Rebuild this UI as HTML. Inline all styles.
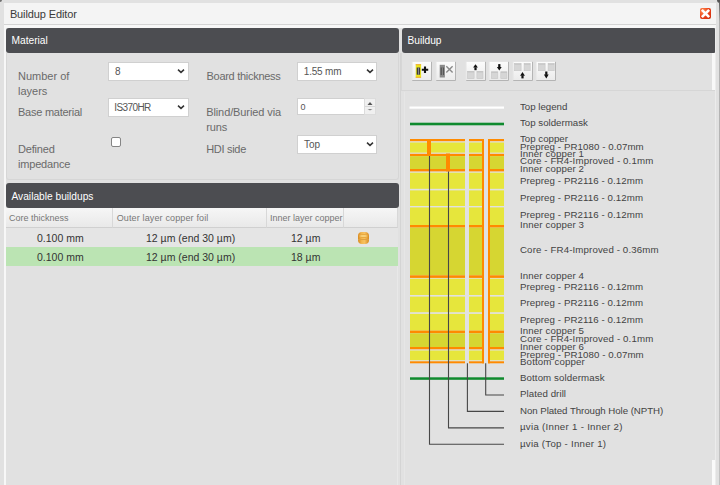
<!DOCTYPE html>
<html><head><meta charset="utf-8">
<style>
*{margin:0;padding:0;box-sizing:border-box}
html,body{width:720px;height:485px;overflow:hidden;background:#e1e1e1;font-family:"Liberation Sans",sans-serif}
.a{position:absolute;white-space:nowrap}
#dlg{position:absolute;left:0;top:0;width:720px;height:485px}
#title{position:absolute;left:4px;top:3px;width:712px;height:22px;background:#f4f4f4;border-bottom:1px solid #d4d4d4}
.hdr{position:absolute;height:25px;background:#4c4d51;border-radius:3px;color:#fff;font-size:10.2px}
.hdr span{left:5.5px!important;top:7.2px!important}
.lbl{position:absolute;font-size:11px;color:#6a6a6a;line-height:14.5px;white-space:nowrap}
.sel{position:absolute;background:#fff;border:1px solid #d0d0d0;height:18.6px;font-size:10px;color:#555}
.sel span{position:absolute;left:6px;top:3px}
.chev{position:absolute;width:8px;height:5px}
.th{position:absolute;top:208px;height:20px;background:linear-gradient(#f6f6f6,#e9e9e9);border-bottom:1px solid #d0d0d0;border-right:1px solid #d8d8d8;font-size:9px;color:#777}
.th span{position:absolute;left:3px;top:5.2px}
.td{position:absolute;font-size:10.5px;color:#333}
.dl{position:absolute;left:520px;font-size:9.7px;color:#333;white-space:nowrap;line-height:10px}
.btn{position:absolute;top:61px;width:20px;height:19px;background:linear-gradient(#fbfbfb,#ececec);border:1px solid #d9d9d9;border-right-color:#bdbdbd;border-bottom-color:#b5b5b5}
</style></head><body>
<div id="dlg">
  <!-- outer corners -->
  <div class="a" style="left:0;top:0;width:2px;height:2px;background:#555;border-radius:0 0 2px 0;opacity:0.8"></div>
  <div class="a" style="left:717px;top:0;width:3px;height:3px;background:#555;border-radius:0 0 0 3px"></div>
  <div class="a" style="left:715px;top:3px;width:1px;height:482px;background:#ececec"></div>
  <div class="a" style="left:718.5px;top:2px;width:1.5px;height:483px;background:linear-gradient(#606060,#b0b0b0 4%,#c2c2c2)"></div>
  <!-- white left strip -->
  <div class="a" style="left:4px;top:25px;width:2px;height:460px;background:#f7f7f7"></div>
  <div id="title"></div>
  <div class="a" style="left:4px;top:25px;width:712px;height:3px;background:#f7f7f7"></div>
  <div class="a" style="left:9.9px;top:8.1px;font-size:11px;color:#3a3a3a;letter-spacing:-0.12px">Buildup Editor</div>
  <!-- close btn -->
  <div class="a" style="left:700px;top:8px;width:11px;height:11px;border-radius:2px;background:radial-gradient(circle at 25% 25%,#ff8a50,#e8401a 55%,#c82a0a)"></div>
  <svg class="a" style="left:700px;top:8px" width="11" height="11"><path d="M2.8 2.8L8.2 8.2M8.2 2.8L2.8 8.2" stroke="#fff" stroke-width="2.6" stroke-linecap="square"/></svg>

  <!-- Material panel -->
  <div class="hdr" style="left:6px;top:28px;width:393px"><span class="a" style="left:5px;top:8px">Material</span></div>
  <div class="a" style="left:6px;top:53px;width:393px;height:127px;border:1px solid #d6d6d6;border-top:none;border-radius:0 0 3px 3px"></div>

  <div class="lbl" style="left:18px;top:69px">Number of<br>layers</div>
  <div class="lbl" style="left:18px;top:105px;letter-spacing:-0.25px">Base material</div>
  <div class="lbl" style="left:18px;top:142px;letter-spacing:-0.18px">Defined<br>impedance</div>
  <div class="lbl" style="left:206.5px;top:69px;letter-spacing:-0.28px">Board thickness</div>
  <div class="lbl" style="left:206.2px;top:105px;letter-spacing:-0.1px">Blind/Buried via<br>runs</div>
  <div class="lbl" style="left:206.2px;top:142px;letter-spacing:-0.3px">HDI side</div>

  <div class="sel" style="left:108px;top:62px;width:80.6px"><span>8</span></div>
  <div class="sel" style="left:108px;top:98px;width:80.6px"><span style="letter-spacing:-0.6px;left:5.3px">IS370HR</span></div>
  <div class="sel" style="left:297px;top:62px;width:80px"><span style="left:5.8px;letter-spacing:-0.2px">1.55 mm</span></div>
  <div class="sel" style="left:297px;top:135px;width:80px"><span>Top</span></div>
  <div class="sel" style="left:297px;top:98px;width:68px;height:17px"><span style="left:2.6px;top:3px;font-size:9px">0</span></div>
  <div class="a" style="left:364px;top:98px;width:12px;height:17px;background:#f0f0f0;border:1px solid #dcdcdc"></div>
  <svg class="a" style="left:364px;top:98px" width="12" height="17"><path d="M3.5 7L6 4L8.5 7Z" fill="#555"/><path d="M1 8.5H11" stroke="#d8d8d8"/><path d="M3.5 11L6 12.5L8.5 11Z" fill="#888"/></svg>
  <svg class="a" style="left:177px;top:68px" width="8" height="6"><path d="M1 1.6L4 4.4L7 1.6" stroke="#333" stroke-width="1.5" fill="none"/></svg>
  <svg class="a" style="left:177px;top:104px" width="8" height="6"><path d="M1 1.6L4 4.4L7 1.6" stroke="#333" stroke-width="1.5" fill="none"/></svg>
  <svg class="a" style="left:366px;top:68px" width="8" height="6"><path d="M1 1.6L4 4.4L7 1.6" stroke="#333" stroke-width="1.5" fill="none"/></svg>
  <svg class="a" style="left:366px;top:141px" width="8" height="6"><path d="M1 1.6L4 4.4L7 1.6" stroke="#333" stroke-width="1.5" fill="none"/></svg>
  <div class="a" style="left:111px;top:137px;width:10px;height:10px;border:1px solid #858585;border-radius:2px;background:#fff"></div>

  <!-- Available buildups -->
  <div class="hdr" style="left:6px;top:183px;width:393px"><span class="a" style="left:5px;top:8px;margin-top:0.7px">Available buildups</span></div>
  <div class="th" style="left:6px;width:107px"><span>Core thickness</span></div>
  <div class="th" style="left:113px;width:154px"><span style="letter-spacing:0.14px;left:3.7px">Outer layer copper foil</span></div>
  <div class="th" style="left:267px;width:77px;overflow:hidden"><span>Inner layer copper</span></div>
  <div class="th" style="left:344px;width:54px"></div>
  <div class="a" style="left:6px;top:228px;width:392px;height:19px;background:#e5e5e5"></div>
  <div class="a" style="left:6px;top:247px;width:392px;height:19px;background:#bbe4b3"></div>
  <div class="td" style="left:37px;top:232px">0.100 mm</div>
  <div class="td" style="left:146px;top:232px">12 µm (end 30 µm)</div>
  <div class="td" style="left:291px;top:232px">12 µm</div>
  <div class="td" style="left:37px;top:251px">0.100 mm</div>
  <div class="td" style="left:146px;top:251px">12 µm (end 30 µm)</div>
  <div class="td" style="left:291px;top:251px">18 µm</div>
  <div class="a" style="left:357.5px;top:232px;width:11.5px;height:12px;border-radius:4px;background:linear-gradient(90deg,#d88a20,#f4b850 35%,#f6c060 60%,#d88a20)"></div>
  <div class="a" style="left:359px;top:233.5px;width:8.5px;height:4.5px;border-radius:50%;background:#f8d078;border:0.8px solid #e8a840"></div>
  <div class="a" style="left:358px;top:239px;width:10.5px;height:1px;background:#e0a040"></div>

  <!-- Buildup panel -->
  <div class="hdr" style="left:402px;top:28px;width:313px;border-radius:3px 1px 1px 3px"><span class="a" style="left:5px;top:8px">Buildup</span></div>
  <div class="a" style="left:401px;top:53px;width:314px;height:38px;border:1px solid #d6d6d6;border-top:none"></div>
  <div class="a" style="left:400px;top:53px;width:1px;height:432px;background:#d4d4d4"></div>
  <div class="a" style="left:397px;top:266px;width:1px;height:219px;background:#e8e8e8"></div>
  <div class="a" style="left:404px;top:92px;width:1px;height:393px;background:#e6e6e6"></div>
  <div class="a" style="left:712px;top:53px;width:3px;height:37px;background:#f8f8f8"></div>
  <div class="a" style="left:712px;top:459.5px;width:3px;height:26px;background:#fafafa"></div>
  <!--TOOLBAR-->
<svg class="a" style="left:0;top:0" width="720" height="485"><defs><linearGradient id="bg" x1="0" y1="0" x2="0" y2="1"><stop offset="0" stop-color="#fcfcfc"/><stop offset="1" stop-color="#ebebeb"/></linearGradient></defs><rect x="412" y="61.5" width="19.5" height="19" fill="url(#bg)"/><path d="M431.5 61.5V80.5H412" stroke="#b4b4b4" stroke-width="1" fill="none"/><path d="M412 80.5V61.5H431.5" stroke="#e4e4e4" stroke-width="1" fill="none"/><rect x="436" y="61.5" width="19.5" height="19" fill="url(#bg)"/><path d="M455.5 61.5V80.5H436" stroke="#b4b4b4" stroke-width="1" fill="none"/><path d="M436 80.5V61.5H455.5" stroke="#e4e4e4" stroke-width="1" fill="none"/><rect x="466" y="61.5" width="19.5" height="19" fill="url(#bg)"/><path d="M485.5 61.5V80.5H466" stroke="#b4b4b4" stroke-width="1" fill="none"/><path d="M466 80.5V61.5H485.5" stroke="#e4e4e4" stroke-width="1" fill="none"/><rect x="489" y="61.5" width="19.5" height="19" fill="url(#bg)"/><path d="M508.5 61.5V80.5H489" stroke="#b4b4b4" stroke-width="1" fill="none"/><path d="M489 80.5V61.5H508.5" stroke="#e4e4e4" stroke-width="1" fill="none"/><rect x="513" y="61.5" width="19.5" height="19" fill="url(#bg)"/><path d="M532.5 61.5V80.5H513" stroke="#b4b4b4" stroke-width="1" fill="none"/><path d="M513 80.5V61.5H532.5" stroke="#e4e4e4" stroke-width="1" fill="none"/><rect x="536" y="61.5" width="19.5" height="19" fill="url(#bg)"/><path d="M555.5 61.5V80.5H536" stroke="#b4b4b4" stroke-width="1" fill="none"/><path d="M536 80.5V61.5H555.5" stroke="#e4e4e4" stroke-width="1" fill="none"/><rect x="415.7" y="64.3" width="5.4" height="13.4" fill="#ece81c"/><rect x="415.7" y="64.3" width="5.4" height="0.9" fill="#f0a030"/><rect x="415.7" y="76.8" width="5.4" height="0.9" fill="#f0a030"/><rect x="416.7" y="67.5" width="3.4" height="7.2" fill="#3c3c3c"/><rect x="418" y="67.5" width="0.8" height="7.2" fill="#9a9a9a"/><path d="M421.8 69.8H428.2M425 66.6V73" stroke="#111" stroke-width="2.1"/><rect x="439.7" y="64.8" width="5.2" height="12.7" fill="#8a8a8a" /><rect x="440.6" y="67.5" width="3.4" height="7.5" fill="#555" /><rect x="441.9" y="67.5" width="0.8" height="7.5" fill="#999" /><path d="M446.3 66.3L452.6 72.4M452.6 66.3L446.3 72.4" stroke="#8a8a8a" stroke-width="1.4"/><path d="M473.1 67.6L475.5 64.3L477.9 67.6Z" fill="#111"/><rect x="474.4" y="67.3" width="2.2" height="2.9000000000000083" fill="#111" /><rect x="467.5" y="71.4" width="6.6" height="7.2" fill="#d6d6d6" stroke="#c6c6c6" stroke-width="0.6" /><rect x="467.5" y="71.4" width="6.6" height="1" fill="#c2c2c2" /><rect x="476.9" y="71.4" width="6.1" height="7.2" fill="#d6d6d6" stroke="#c6c6c6" stroke-width="0.6" /><rect x="476.9" y="71.4" width="6.1" height="1" fill="#c2c2c2" /><rect x="498.2" y="64.1" width="2.2" height="3.100000000000011" fill="#111" /><path d="M496.90000000000003 66.9L499.3 70.5L501.7 66.9Z" fill="#111"/><rect x="491.4" y="71.8" width="6.4" height="6.8" fill="#d6d6d6" stroke="#c6c6c6" stroke-width="0.6" /><rect x="491.4" y="71.8" width="6.4" height="1" fill="#c2c2c2" /><rect x="500.8" y="71.8" width="6.1" height="6.8" fill="#d6d6d6" stroke="#c6c6c6" stroke-width="0.6" /><rect x="500.8" y="71.8" width="6.1" height="1" fill="#c2c2c2" /><rect x="514.5" y="63.6" width="6.6" height="7.1" fill="#d6d6d6" stroke="#c6c6c6" stroke-width="0.6" /><rect x="514.5" y="63.6" width="6.6" height="1" fill="#c2c2c2" /><rect x="524.1" y="63.6" width="6.1" height="7.1" fill="#d6d6d6" stroke="#c6c6c6" stroke-width="0.6" /><rect x="524.1" y="63.6" width="6.1" height="1" fill="#c2c2c2" /><path d="M520.1 75.7L522.5 72L524.9 75.7Z" fill="#111"/><rect x="521.4" y="75.4" width="2.2" height="3.0000000000000027" fill="#111" /><rect x="538.5" y="63.6" width="6.6" height="7.1" fill="#d6d6d6" stroke="#c6c6c6" stroke-width="0.6" /><rect x="538.5" y="63.6" width="6.6" height="1" fill="#c2c2c2" /><rect x="548.1" y="63.6" width="6.1" height="7.1" fill="#d6d6d6" stroke="#c6c6c6" stroke-width="0.6" /><rect x="548.1" y="63.6" width="6.1" height="1" fill="#c2c2c2" /><rect x="545.1999999999999" y="71.5" width="2.2" height="3.399999999999994" fill="#111" /><path d="M543.9 74.6L546.3 78.4L548.6999999999999 74.6Z" fill="#111"/></svg>


  <!--DIAGRAM-->
<svg class="a" style="left:0;top:0" width="720" height="485"><rect x="410" y="139" width="55" height="2.2" fill="#ff8a00"/><rect x="469" y="139" width="15" height="2.2" fill="#ff8a00"/><rect x="488" y="139" width="16" height="2.2" fill="#ff8a00"/><rect x="410" y="142.5" width="55" height="10.1" fill="#e6e63c"/><rect x="469" y="142.5" width="15" height="10.1" fill="#e6e63c"/><rect x="488" y="142.5" width="16" height="10.1" fill="#e6e63c"/><rect x="410" y="153.8" width="55" height="2.3" fill="#ff8a00"/><rect x="469" y="153.8" width="15" height="2.3" fill="#ff8a00"/><rect x="488" y="153.8" width="16" height="2.3" fill="#ff8a00"/><rect x="410" y="156.1" width="55" height="12.9" fill="#d6d632"/><rect x="469" y="156.1" width="15" height="12.9" fill="#d6d632"/><rect x="488" y="156.1" width="16" height="12.9" fill="#d6d632"/><rect x="410" y="169" width="55" height="2.4" fill="#ff8a00"/><rect x="469" y="169" width="15" height="2.4" fill="#ff8a00"/><rect x="488" y="169" width="16" height="2.4" fill="#ff8a00"/><rect x="410" y="172.7" width="55" height="16.1" fill="#e6e63c"/><rect x="469" y="172.7" width="15" height="16.1" fill="#e6e63c"/><rect x="488" y="172.7" width="16" height="16.1" fill="#e6e63c"/><rect x="410" y="190.4" width="55" height="15.6" fill="#e6e63c"/><rect x="469" y="190.4" width="15" height="15.6" fill="#e6e63c"/><rect x="488" y="190.4" width="16" height="15.6" fill="#e6e63c"/><rect x="410" y="207.4" width="55" height="17.6" fill="#e6e63c"/><rect x="469" y="207.4" width="15" height="17.6" fill="#e6e63c"/><rect x="488" y="207.4" width="16" height="17.6" fill="#e6e63c"/><rect x="410" y="225" width="55" height="2.6" fill="#ff8a00"/><rect x="469" y="225" width="15" height="2.6" fill="#ff8a00"/><rect x="488" y="225" width="16" height="2.6" fill="#ff8a00"/><rect x="410" y="227.6" width="55" height="47.7" fill="#d6d632"/><rect x="469" y="227.6" width="15" height="47.7" fill="#d6d632"/><rect x="488" y="227.6" width="16" height="47.7" fill="#d6d632"/><rect x="410" y="275.3" width="55" height="2.6" fill="#ff8a00"/><rect x="469" y="275.3" width="15" height="2.6" fill="#ff8a00"/><rect x="488" y="275.3" width="16" height="2.6" fill="#ff8a00"/><rect x="410" y="278.7" width="55" height="16.3" fill="#e6e63c"/><rect x="469" y="278.7" width="15" height="16.3" fill="#e6e63c"/><rect x="488" y="278.7" width="16" height="16.3" fill="#e6e63c"/><rect x="410" y="296.6" width="55" height="15.6" fill="#e6e63c"/><rect x="469" y="296.6" width="15" height="15.6" fill="#e6e63c"/><rect x="488" y="296.6" width="16" height="15.6" fill="#e6e63c"/><rect x="410" y="313.9" width="55" height="16.7" fill="#e6e63c"/><rect x="469" y="313.9" width="15" height="16.7" fill="#e6e63c"/><rect x="488" y="313.9" width="16" height="16.7" fill="#e6e63c"/><rect x="410" y="330.6" width="55" height="2.7" fill="#ff8a00"/><rect x="469" y="330.6" width="15" height="2.7" fill="#ff8a00"/><rect x="488" y="330.6" width="16" height="2.7" fill="#ff8a00"/><rect x="410" y="333.3" width="55" height="13.7" fill="#d6d632"/><rect x="469" y="333.3" width="15" height="13.7" fill="#d6d632"/><rect x="488" y="333.3" width="16" height="13.7" fill="#d6d632"/><rect x="410" y="347" width="55" height="2.3" fill="#ff8a00"/><rect x="469" y="347" width="15" height="2.3" fill="#ff8a00"/><rect x="488" y="347" width="16" height="2.3" fill="#ff8a00"/><rect x="410" y="350.5" width="55" height="9.7" fill="#e6e63c"/><rect x="469" y="350.5" width="15" height="9.7" fill="#e6e63c"/><rect x="488" y="350.5" width="16" height="9.7" fill="#e6e63c"/><rect x="410" y="361.3" width="55" height="2.0" fill="#ff8a00"/><rect x="469" y="361.3" width="15" height="2.0" fill="#ff8a00"/><rect x="488" y="361.3" width="16" height="2.0" fill="#ff8a00"/><rect x="427" y="139" width="4" height="17" fill="#ff8a00"/><rect x="446" y="153.5" width="4" height="17.9" fill="#ff8a00"/><rect x="482" y="139" width="2" height="224.3" fill="#ff8a00"/><rect x="488" y="139" width="2" height="224.3" fill="#ff8a00"/><rect x="409.5" y="106.5" width="94.5" height="2.2" fill="#ffffff"/><rect x="410" y="122.7" width="94" height="2.6" fill="#0f8a2e"/><rect x="410" y="377.3" width="94" height="2.5" fill="#0f8a2e"/><path d="M429.5 156V444.3H504M448.5 171.4V427.9H504M467.4 363.3V411.4H504M485.7 363.3V395H504" stroke="#474747" stroke-width="1.1" fill="none"/></svg>
<!--LABELS-->
<svg class="a" style="left:0;top:0;opacity:0.99" width="720" height="485"><g font-family="Liberation Sans" font-size="9.7" fill="#424242"><text x="520" y="110">Top legend</text><text x="520" y="126">Top soldermask</text><text x="520" y="142.3">Top copper</text><text x="520" y="149.5" letter-spacing="0.083">Prepreg - PR1080 - 0.07mm</text><text x="520" y="157" letter-spacing="0.11">Inner copper 1</text><text x="520" y="164" letter-spacing="0.135">Core - FR4-Improved - 0.1mm</text><text x="520" y="172.3" letter-spacing="0.11">Inner copper 2</text><text x="520" y="183.6" letter-spacing="0.083">Prepreg - PR2116 - 0.12mm</text><text x="520" y="200.7" letter-spacing="0.083">Prepreg - PR2116 - 0.12mm</text><text x="520" y="217.7" letter-spacing="0.083">Prepreg - PR2116 - 0.12mm</text><text x="520" y="228.4" letter-spacing="0.11">Inner copper 3</text><text x="520" y="253.1" letter-spacing="0.125">Core - FR4-Improved - 0.36mm</text><text x="520" y="278.8" letter-spacing="0.11">Inner copper 4</text><text x="520" y="289.7" letter-spacing="0.083">Prepreg - PR2116 - 0.12mm</text><text x="520" y="306.4" letter-spacing="0.083">Prepreg - PR2116 - 0.12mm</text><text x="520" y="323.4" letter-spacing="0.083">Prepreg - PR2116 - 0.12mm</text><text x="520" y="334" letter-spacing="0.11">Inner copper 5</text><text x="520" y="341.8" letter-spacing="0.135">Core - FR4-Improved - 0.1mm</text><text x="520" y="349.6" letter-spacing="0.11">Inner copper 6</text><text x="520" y="358" letter-spacing="0.083">Prepreg - PR1080 - 0.07mm</text><text x="520" y="364.8" letter-spacing="0.15">Bottom copper</text><text x="520" y="380.5" letter-spacing="0.1">Bottom soldermask</text><text x="520" y="397" letter-spacing="0.07">Plated drill</text><text x="520" y="413.75" letter-spacing="-0.05">Non Plated Through Hole (NPTH)</text><text x="520" y="430" letter-spacing="0.28">µvia (Inner 1 - Inner 2)</text><text x="520" y="446.75" letter-spacing="0.24">µvia (Top - Inner 1)</text></g></svg>

</div>
</body></html>
